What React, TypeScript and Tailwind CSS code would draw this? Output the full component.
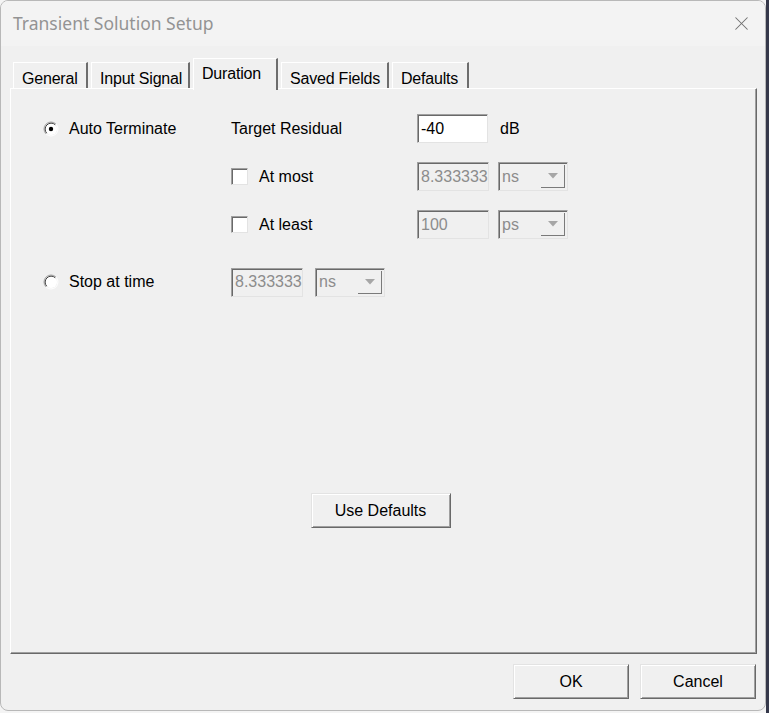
import { X } from "lucide-react"

const sunken =
  "border-t border-l border-t-[#a0a0a0] border-l-[#a0a0a0] border-r border-b border-r-[#e3e3e3] border-b-[#e3e3e3] shadow-[inset_1px_1px_0_#696969]"

const raised =
  "border-t border-l border-t-[#e3e3e3] border-l-[#e3e3e3] border-r border-b border-r-[#696969] border-b-[#696969] shadow-[inset_1px_1px_0_#ffffff,inset_-1px_-1px_0_#a0a0a0]"

function Radio({ checked }: { checked?: boolean }) {
  return (
    <svg width="16" height="16" viewBox="0 0 16 16" className="shrink-0">
      <circle cx="8" cy="8" r="6" fill="#ffffff" />
      <path d="M12.95 3.05 A7 7 0 0 0 3.05 12.95" stroke="#a0a0a0" fill="none" />
      <path d="M12.24 3.76 A6 6 0 0 0 3.76 12.24" stroke="#404040" fill="none" />
      <path d="M12.95 3.05 A7 7 0 0 1 3.05 12.95" stroke="#ffffff" fill="none" />
      {checked && <circle cx="8" cy="8" r="2.2" fill="#000000" />}
    </svg>
  )
}

function Checkbox() {
  return <div className={`w-[17px] h-[17px] bg-white shrink-0 ${sunken}`} />
}

function TextBox({ value, width, enabled }: { value: string; width: string; enabled?: boolean }) {
  return (
    <div className={`${width} h-[29px] ${sunken} ${enabled ? "bg-white" : "bg-[#f0f0f0]"} flex items-center pl-[3px]`}>
      <input
        readOnly
        value={value}
        className={`w-full min-w-0 bg-transparent outline-none p-0 ${enabled ? "text-black" : "text-[#8c8c8c]"}`}
      />
    </div>
  )
}

function UnitSelect({ unit }: { unit: string }) {
  return (
    <div className={`w-[70px] h-[29px] ${sunken} bg-[#f0f0f0] flex items-stretch p-[2px]`}>
      <div className="flex-1 flex items-center pl-[1px] text-[#8c8c8c]">{unit}</div>
      <div className="w-[24px] flex items-center justify-center border-r border-b border-[#7a7a7a]">
        <svg width="10" height="6" viewBox="0 0 10 6">
          <path d="M0 0 H10 L5 5.5 Z" fill="#a6a6a6" />
        </svg>
      </div>
    </div>
  )
}

function Tab({ label, width, active }: { label: string; width: string; active?: boolean }) {
  return (
    <div
      className={`${width} ${
        active ? "h-[32px] -mb-[2px] relative z-10 pt-[3px]" : "h-[26px] pt-[4px]"
      } bg-[#f0f0f0] border-t border-l border-t-white border-l-white border-r-2 border-r-[#6d6d6d] px-[8px] whitespace-nowrap tracking-[-0.2px]`}
    >
      {label}
    </div>
  )
}

function Button({ label, width }: { label: string; width: string }) {
  return (
    <div className={`${width} h-[35px] bg-[#f0f0f0] ${raised} flex items-center justify-center`}>{label}</div>
  )
}

export default function App() {
  return (
    <div className="w-[769px] h-[713px] bg-[#f4f4f4] flex text-[16px] text-black font-['Liberation_Sans',Arial,sans-serif]">
      <div className="w-[766px] h-[711px] rounded-[8px] border border-[#b8b8b8] bg-[#f0f0f0] flex flex-col overflow-hidden">
        {/* title bar */}
        <div className="h-[45px] shrink-0 bg-[#f3f3f3] flex items-center justify-between pl-[12px] pr-[12px]">
          <span className="font-['Noto_Sans',sans-serif] text-[17.5px] text-[#939393]">Transient Solution Setup</span>
          <X size={23} strokeWidth={1.1} color="#6e6e6e" />
        </div>

        {/* tabs */}
        <div className="mt-[12px] h-[30px] flex items-end gap-[3px] pl-[12px]">
          <Tab label="General" width="w-[75px]" />
          <Tab label="Input Signal" width="w-[99px]" />
          <Tab label="Duration" width="w-[85px]" active />
          <Tab label="Saved Fields" width="w-[108px]" />
          <Tab label="Defaults" width="w-[77px]" />
        </div>

        {/* page */}
        <div className="ml-[9px] w-[747px] h-[566px] shrink-0 border-t border-l border-t-white border-l-white border-r border-b border-r-[#696969] border-b-[#696969] shadow-[inset_-1px_-1px_0_#a0a0a0] flex flex-col">
          <div className="pl-[32px] pt-[25px] flex flex-col">
            <div className="flex items-center h-[29px]">
              <div className="w-[188px] flex items-center gap-[10px]">
                <Radio checked />
                <span>Auto Terminate</span>
              </div>
              <div className="w-[186px]">Target Residual</div>
              <TextBox value="-40" width="w-[71px]" enabled />
              <span className="ml-[12px]">dB</span>
            </div>

            <div className="flex items-center h-[29px] mt-[19px]">
              <div className="w-[188px]" />
              <div className="w-[186px] flex items-center gap-[11px]">
                <Checkbox />
                <span>At most</span>
              </div>
              <TextBox value="8.3333333333" width="w-[72px]" />
              <div className="ml-[9px]">
                <UnitSelect unit="ns" />
              </div>
            </div>

            <div className="flex items-center h-[29px] mt-[19px]">
              <div className="w-[188px]" />
              <div className="w-[186px] flex items-center gap-[11px]">
                <Checkbox />
                <span>At least</span>
              </div>
              <TextBox value="100" width="w-[72px]" />
              <div className="ml-[9px]">
                <UnitSelect unit="ps" />
              </div>
            </div>

            <div className="flex items-center h-[30px] mt-[28px]">
              <div className="w-[188px] flex items-center gap-[10px]">
                <Radio />
                <span>Stop at time</span>
              </div>
              <TextBox value="8.3333333333" width="w-[72px]" />
              <div className="ml-[12px]">
                <UnitSelect unit="ns" />
              </div>
            </div>
          </div>

          <div className="mt-[196px] flex justify-center pr-[6px]">
            <Button label="Use Defaults" width="w-[140px]" />
          </div>
        </div>

        {/* dialog buttons */}
        <div className="mt-[10px] flex justify-end gap-[11px] pr-[9px]">
          <Button label="OK" width="w-[116px]" />
          <Button label="Cancel" width="w-[116px]" />
        </div>
      </div>
      <div className="w-[3px] bg-[#35384a]" />
    </div>
  )
}
